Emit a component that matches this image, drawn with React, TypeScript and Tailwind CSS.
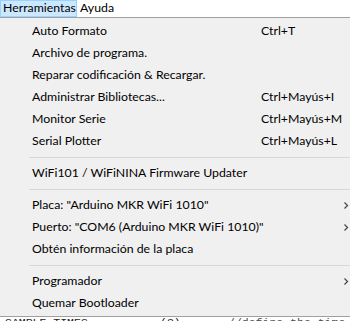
import React from 'react';

type Item =
  | { kind: 'item'; label: string; shortcut?: string; sub?: boolean }
  | { kind: 'sep' };

const items: Item[] = [
  { kind: 'item', label: 'Auto Formato', shortcut: 'Ctrl+T' },
  { kind: 'item', label: 'Archivo de programa.' },
  { kind: 'item', label: 'Reparar codificación & Recargar.' },
  { kind: 'item', label: 'Administrar Bibliotecas...', shortcut: 'Ctrl+Mayús+I' },
  { kind: 'item', label: 'Monitor Serie', shortcut: 'Ctrl+Mayús+M' },
  { kind: 'item', label: 'Serial Plotter', shortcut: 'Ctrl+Mayús+L' },
  { kind: 'sep' },
  { kind: 'item', label: 'WiFi101 / WiFiNINA Firmware Updater' },
  { kind: 'sep' },
  { kind: 'item', label: 'Placa: "Arduino MKR WiFi 1010"', sub: true },
  { kind: 'item', label: 'Puerto: "COM6 (Arduino MKR WiFi 1010)"', sub: true },
  { kind: 'item', label: 'Obtén información de la placa' },
  { kind: 'sep' },
  { kind: 'item', label: 'Programador', sub: true },
  { kind: 'item', label: 'Quemar Bootloader' },
];

const Chevron = () => (
  <svg width="5" height="7" viewBox="0 0 5 7" className="absolute left-[344px] top-[8px]">
    <path d="M0.5 0.5 L3.5 3.5 L0.5 6.5" fill="none" stroke="#444" strokeWidth="1.2" />
  </svg>
);

const App: React.FC = () => {
  return (
    <div
      className="w-[350px] h-[321px] overflow-hidden bg-white text-[12.3px] text-black"
      style={{ fontFamily: 'Lato, "Noto Sans", sans-serif' }}
    >
      {/* menu bar */}
      <div className="flex h-[17px] items-stretch leading-none">
        <div className="flex items-center px-[2px] bg-[#cce8ff] border border-[#99d1ff] w-[77px]">
          Herramientas
        </div>
        <div className="flex items-center pl-[3px]">Ayuda</div>
      </div>

      {/* dropdown */}
      <div className="bg-[#f0f0f0] border-t border-b border-[#a0a0a0] py-[2px] leading-none">
        {items.map((it, i) =>
          it.kind === 'sep' ? (
            <div key={i} className="h-[10px] flex items-center pl-[29px]">
              <div className="h-px w-full bg-[#d7d7d7]" />
            </div>
          ) : (
            <div key={i} className="relative h-[22px] flex items-center pl-[32px] whitespace-nowrap">
              <span className="w-[229px]">{it.label}</span>
              {it.shortcut && <span>{it.shortcut}</span>}
              {it.sub && <Chevron />}
            </div>
          )
        )}
      </div>

      {/* code behind, only top edge visible */}
      <div
        className="relative h-[5px] overflow-hidden whitespace-pre text-[11.5px] leading-none text-[#222]"
        style={{ fontFamily: '"Liberation Mono", monospace' }}
      >
        <span className="absolute left-[5px] top-0">SAMPLE_TIMES</span>
        <span className="absolute left-[160px] top-0">(3)</span>
        <span className="absolute left-[228px] top-0 text-[#434f54]">//define the time</span>
      </div>
    </div>
  );
};

export default App;
